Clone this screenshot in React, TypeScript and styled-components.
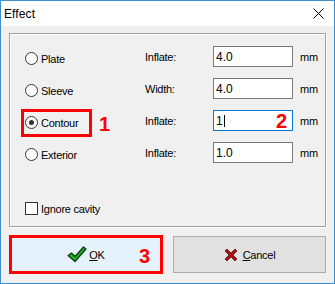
import styled, { createGlobalStyle } from 'styled-components';

const Global = createGlobalStyle`
  html, body { margin: 0; padding: 0; background: #ffffff; }
  body { font-family: "Liberation Sans", Arial, sans-serif; }
`;

const Window = styled.div`
  width: 335px;
  height: 284px;
  box-sizing: border-box;
  border: 1px solid #3f8fcf;
  border-top-color: #3f8fcf;
  background: #f0f0f0;
  display: flex;
  flex-direction: column;
  font-size: 11px;
  color: #000;
`;

const TitleBar = styled.div`
  height: 25px;
  flex: none;
  background: #ffffff;
  display: flex;
  align-items: center;
  justify-content: space-between;
  padding: 0 10px 0 3px;
`;

const Title = styled.span`
  font-size: 12px;
  letter-spacing: 0.1px;
`;

const Group = styled.div`
  margin: 7px 8px 0 8px;
  border: 1px solid #a0a0a0;
  box-shadow: inset 1px 1px 0 #ffffff, 1px 1px 0 #ffffff;
  padding: 12px 0 11px 15px;
  display: flex;
  flex-direction: column;
`;

const Rows = styled.div`
  display: flex;
  flex-direction: column;
  gap: 11px;
`;

const Row = styled.div`
  position: relative;
  display: grid;
  grid-template-columns: 120px 68px 80px auto;
  align-items: center;
  height: 21px;
`;

const Choice = styled.label<{ $marked?: boolean }>`
  position: relative;
  align-self: start;
  margin-top: 6px;
  display: flex;
  align-items: center;
  gap: 3px;
  height: 13px;
  ${p => p.$marked && `
    &::after {
      content: '';
      position: absolute;
      left: -4px;
      top: -7px;
      width: 71px;
      height: 28px;
      box-sizing: border-box;
      border: 3px solid #ff0000;
    }
  `}
`;

const Radio = styled.span<{ $checked?: boolean }>`
  width: 13px;
  height: 13px;
  box-sizing: border-box;
  border: 1px solid #333333;
  border-radius: 50%;
  background: #ffffff;
  display: flex;
  align-items: center;
  justify-content: center;
  &::before {
    content: '';
    width: 5px;
    height: 5px;
    border-radius: 50%;
    background: ${p => (p.$checked ? '#333333' : 'transparent')};
  }
`;

const Check = styled.span`
  width: 13px;
  height: 13px;
  box-sizing: border-box;
  border: 1px solid #333333;
  background: #ffffff;
`;

const Text = styled.span`
  letter-spacing: -0.25px;
  white-space: nowrap;
`;

const Field = styled.div<{ $focused?: boolean }>`
  position: relative;
  width: 80px;
  height: 21px;
  box-sizing: border-box;
  border: 1px solid ${p => (p.$focused ? '#0078d7' : '#7a7a7a')};
  background: #ffffff;
  padding-left: 2px;
  display: flex;
  align-items: center;
  font-size: 12px;
`;

const Caret = styled.span`
  display: inline-block;
  width: 1px;
  height: 12px;
  margin-left: 1px;
  background: #000;
`;

const Unit = styled.span`
  margin-left: 7px;
  letter-spacing: -0.2px;
`;

const Marker = styled.span<{ $left: number; $top: number }>`
  position: absolute;
  left: ${p => p.$left}px;
  top: ${p => p.$top}px;
  font-size: 20px;
  line-height: 20px;
  font-weight: bold;
  color: #ff0000;
  pointer-events: none;
`;

const CheckRow = styled.label`
  margin-top: 39px;
  display: flex;
  align-items: center;
  gap: 3px;
  height: 13px;
`;

const Buttons = styled.div`
  margin-top: 8px;
  padding: 0 8px;
  display: flex;
  align-items: center;
  gap: 10px;
`;

const Button = styled.button<{ $primary?: boolean }>`
  position: relative;
  box-sizing: border-box;
  width: ${p => (p.$primary ? 154 : 153)}px;
  height: ${p => (p.$primary ? 39 : 37)}px;
  border: ${p => (p.$primary ? '3px solid #ff0000' : '1px solid #adadad')};
  background: ${p => (p.$primary ? '#e5f1fb' : '#e1e1e1')};
  display: flex;
  align-items: center;
  justify-content: center;
  gap: ${p => (p.$primary ? 2 : 5)}px;
  padding: 0;
  font-family: inherit;
  font-size: 11px;
  color: #000;
`;

const CloseIcon = () => (
  <svg width="11" height="11" viewBox="0 0 11 11">
    <path d="M0.5 0.5 L10.5 10.5 M10.5 0.5 L0.5 10.5" stroke="#000" strokeWidth="1" />
  </svg>
);

const TickIcon = () => (
  <svg width="20" height="17" viewBox="0 0 20 17">
    <path
      d="M1 9.5 L4.5 7 L8 10.5 L16.5 1 L19 3 L8 15.5 Z"
      fill="#22b022"
      stroke="#0d3a12"
      strokeWidth="1.2"
      strokeLinejoin="round"
    />
  </svg>
);

const CrossIcon = () => (
  <svg width="14" height="14" viewBox="0 0 14 14">
    <path
      d="M1 3 L3 1 L7 5 L11 1 L13 3 L9 7 L13 11 L11 13 L7 9 L3 13 L1 11 L5 7 Z"
      fill="#a31515"
      stroke="#6e0d0d"
      strokeWidth="0.8"
      strokeLinejoin="round"
    />
  </svg>
);

const rows = [
  { name: 'Plate', label: 'Inflate:', value: '4.0' },
  { name: 'Sleeve', label: 'Width:', value: '4.0' },
  { name: 'Contour', label: 'Inflate:', value: '1', active: true },
  { name: 'Exterior', label: 'Inflate:', value: '1.0' },
];

export default function App() {
  return (
    <>
      <Global />
      <Window>
        <TitleBar>
          <Title>Effect</Title>
          <CloseIcon />
        </TitleBar>
        <Group>
          <Rows>
            {rows.map(r => (
              <Row key={r.name}>
                <Choice $marked={r.active}>
                  <Radio $checked={r.active} />
                  <Text>{r.name}</Text>
                </Choice>
                {r.active && <Marker $left={74} $top={4}>1</Marker>}
                <Text>{r.label}</Text>
                <Field $focused={r.active}>
                  {r.value}
                  {r.active && <Caret />}
                  {r.active && <Marker $left={62} $top={0}>2</Marker>}
                </Field>
                <Unit>mm</Unit>
              </Row>
            ))}
          </Rows>
          <CheckRow>
            <Check />
            <Text>Ignore cavity</Text>
          </CheckRow>
        </Group>
        <Buttons>
          <Button $primary>
            <TickIcon />
            <Text><u>O</u>K</Text>
            <Marker $left={127} $top={8}>3</Marker>
          </Button>
          <Button>
            <CrossIcon />
            <Text><u>C</u>ancel</Text>
          </Button>
        </Buttons>
      </Window>
    </>
  );
}
